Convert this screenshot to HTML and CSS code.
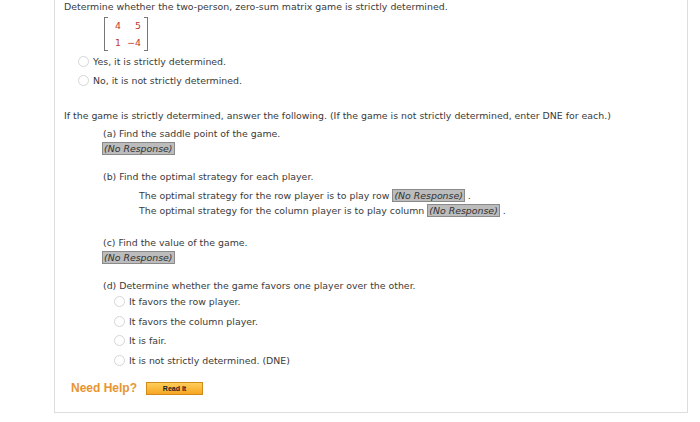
FILE: index.html
```html
<!DOCTYPE html>
<html>
<head>
<meta charset="utf-8">
<link rel="stylesheet" href="styles.css">
</head>
<body>
<div class="panel">
  <p class="line q">Determine whether the two-person, zero-sum matrix game is strictly determined.</p>
  <div class="matrix">
    <span class="cell">4</span><span class="cell">5</span>
    <span class="cell">1</span><span class="cell">&minus;4</span>
  </div>
  <ul class="choices top">
    <li><span class="radio"></span>Yes, it is strictly determined.</li>
    <li><span class="radio"></span>No, it is not strictly determined.</li>
  </ul>
  <p class="line intro">If the game is strictly determined, answer the following. (If the game is not strictly determined, enter DNE for each.)</p>
  <div class="part part-a">
    <p class="line">(a) Find the saddle point of the game.</p>
    <span class="resp">(No Response)</span>
  </div>
  <div class="part part-b">
    <p class="line">(b) Find the optimal strategy for each player.</p>
    <div class="strat">
      <p class="sline">The optimal strategy for the row player is to play row <span class="resp">(No Response)</span> .</p>
      <p class="sline">The optimal strategy for the column player is to play column <span class="resp">(No Response)</span> .</p>
    </div>
  </div>
  <div class="part part-c">
    <p class="line">(c) Find the value of the game.</p>
    <span class="resp">(No Response)</span>
  </div>
  <div class="part part-d">
    <p class="line">(d) Determine whether the game favors one player over the other.</p>
    <ul class="choices sub">
      <li><span class="radio"></span>It favors the row player.</li>
      <li><span class="radio"></span>It favors the column player.</li>
      <li><span class="radio"></span>It is fair.</li>
      <li><span class="radio"></span>It is not strictly determined. (DNE)</li>
    </ul>
  </div>
  <div class="help">
    <span class="need">Need Help?</span>
    <span class="readit">Read It</span>
  </div>
</div>
</body>
</html>
```
FILE: styles.css
```css
html, body {
  margin: 0;
  padding: 0;
  background: #fff;
}
body {
  font-family: "DejaVu Sans", Verdana, sans-serif;
  font-size: 9.4px;
  color: #3a3a3a;
}
.panel {
  margin-left: 54px;
  width: 634px;
  height: 413px;
  box-sizing: border-box;
  border: 1px solid #ddd;
  border-top: none;
  padding-left: 9px;
}
p { margin: 0; }
.line {
  line-height: 14px;
  white-space: nowrap;
}
.matrix {
  margin: 3px 0 0 40px;
  width: 44px;
  height: 34px;
  box-sizing: border-box;
  border-left: 1px solid #777;
  border-right: 1px solid #777;
  position: relative;
  display: grid;
  grid-template-columns: 1fr 1fr;
  grid-auto-rows: 17px;
  align-items: center;
  padding: 0 6px 0 10px;
  color: #c0392b;
}
.matrix::before, .matrix::after {
  content: "";
  position: absolute;
  top: 0;
  bottom: 0;
  width: 3px;
  border-top: 1px solid #777;
  border-bottom: 1px solid #777;
}
.matrix::before { left: 0; }
.matrix::after { right: 0; }
.cell:nth-child(2n) { text-align: right; }
.choices {
  list-style: none;
  margin: 0;
  padding: 0;
}
.choices li {
  display: flex;
  align-items: center;
  height: 19px;
  white-space: nowrap;
}
.choices.top { margin-left: 14px; margin-top: 1px; }
.radio {
  width: 11px;
  height: 11px;
  border: 1px solid #d6d6d6;
  border-radius: 50%;
  box-sizing: border-box;
  margin-right: 4px;
  background: #fff;
  flex: none;
}
.intro { margin-top: 19px; }
.part { margin-left: 39px; }
.part-a { margin-top: 4px; }
.resp {
  display: inline-block;
  background: #bcbcbc;
  border: 1px solid #8a8a8a;
  font-style: italic;
  line-height: 11px;
  padding: 0 1px;
  color: #333;
}
.part-a .resp, .part-c .resp { margin-top: 1px; margin-left: -1px; }
.part-b { margin-top: 15px; }
.strat { margin-left: 36px; margin-top: 4px; }
.sline { line-height: 15px; white-space: nowrap; }
.part-c { margin-top: 18px; }
.part-d { margin-top: 15px; }
.choices.sub {
  margin-left: 11px;
  margin-top: -1px;
}
.choices.sub li { height: 19.5px; }
.help {
  display: flex;
  align-items: center;
  margin-left: 7px;
  margin-top: 11px;
  height: 14px;
}
.need {
  font-family: "Liberation Sans", Arial, sans-serif;
  font-weight: bold;
  font-size: 12px;
  color: #e89530;
}
.readit {
  margin-left: 9px;
  width: 57px;
  height: 13px;
  box-sizing: border-box;
  border: 1px solid #d08a1a;
  background: linear-gradient(#ffce5a, #f6a623);
  font-family: "Liberation Sans", Arial, sans-serif;
  font-weight: bold;
  font-size: 7px;
  color: #222;
  display: flex;
  align-items: center;
  justify-content: center;
}
```
